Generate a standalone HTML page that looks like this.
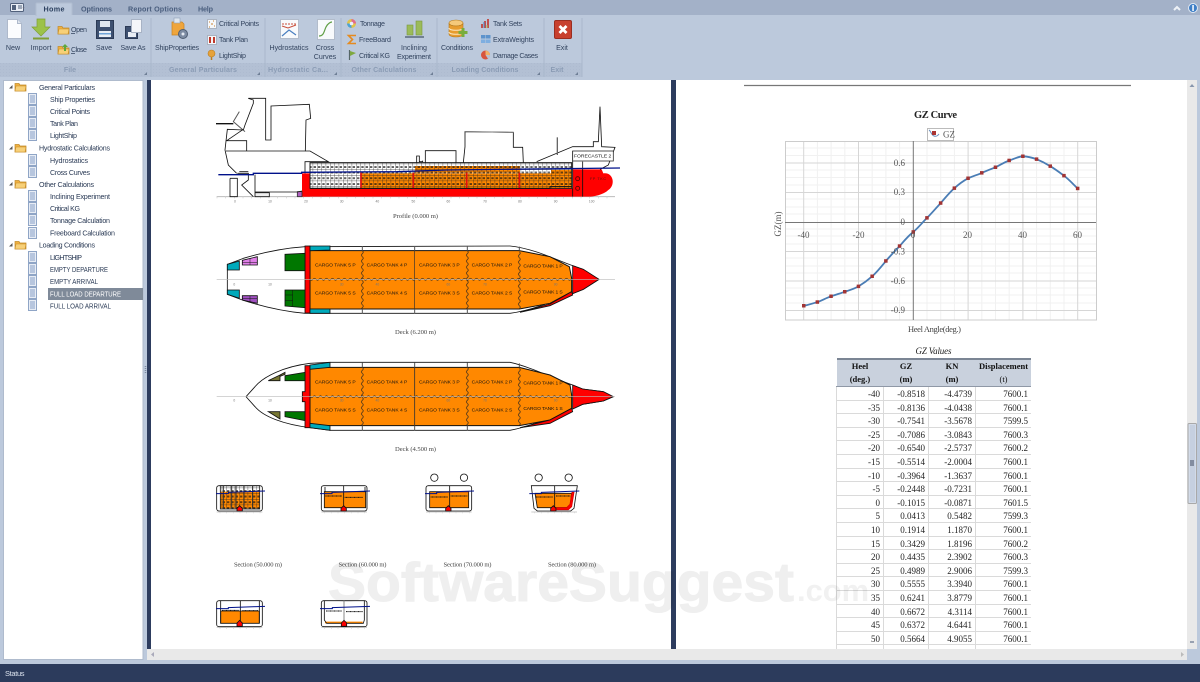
<!DOCTYPE html>
<html lang="en"><head><meta charset="utf-8"><title>GZ Report</title>
<style>
html,body{margin:0;padding:0;width:1200px;height:682px;overflow:hidden;background:#bcc9dc}
svg{position:absolute;left:0;top:0;display:block}
.s{font-family:"Liberation Sans",sans-serif}
.f{font-family:"Liberation Serif",serif}
.rb text{font-family:"Liberation Sans",sans-serif;font-size:7.1px;fill:#33445f}
.m{text-anchor:middle}
.gl text{font-family:"Liberation Sans",sans-serif;font-size:7.1px;font-weight:bold;fill:#8b9cb5;text-anchor:middle}
.tr text{font-family:"Liberation Sans",sans-serif;font-size:7.1px;fill:#2a3a55}
.ct{font-family:"Liberation Sans",sans-serif;font-size:14px;fill:#111}
.lab{font-family:"Liberation Serif",serif;font-size:6.6px;fill:#444;text-anchor:middle}
.ax{font-family:"Liberation Serif",serif;font-size:9px;fill:#555}
.sc text{font-family:"Liberation Sans",sans-serif;font-size:10px;fill:#777;stroke:none;text-anchor:middle}
#tb{position:absolute;left:836px;top:358px;width:195px;height:291px;overflow:hidden;filter:blur(.25px)}
#tb table{border-collapse:collapse;table-layout:fixed;width:195px;font-family:"Liberation Serif",serif;font-size:9px;color:#222}
#tb th{background:#c9d1dd;border-top:2px solid #7b8594;border-bottom:1px solid #8f98a6;height:26px;line-height:13px;font-size:8.5px;font-weight:bold;padding:0;color:#111}
#tb td{height:13.6px;padding:2px 3px 0 0;line-height:10.6px;text-align:right;border:1px solid #dadada;box-sizing:border-box}
</style></head><body>
<svg width="1200" height="682" viewBox="0 0 1200 682" style="filter:blur(.3px)">
<defs>
<pattern id="cells" width="13" height="17" patternUnits="userSpaceOnUse"><path d="M0,0V17M0,0H13" stroke="#222" stroke-width="2" fill="none"/><path d="M3,8h7M3,11h7" stroke="#111" stroke-width="2"/></pattern>
<pattern id="hw" width="18" height="10" patternUnits="userSpaceOnUse"><path d="M0,5C4,9 5,9 9,5C13,1 14,1 18,5" stroke="#222" stroke-width="2" fill="none"/></pattern>
<pattern id="vw" width="10" height="18" patternUnits="userSpaceOnUse"><path d="M5,0C9,4 9,5 5,9C1,13 1,14 5,18" stroke="#222" stroke-width="2" fill="none"/></pattern>
<pattern id="dot" width="3" height="3" patternUnits="userSpaceOnUse"><rect width="1" height="1" fill="#aebbd0"/></pattern>
<g id="doc"><rect x=".5" y=".5" width="8" height="11" fill="#e8edf5" stroke="#8fa5c6"/><path d="M2,3h5M2,5h5M2,7h5M2,9h5" stroke="#86a0c6"/></g>
<g id="fld"><path d="M0,2.5h4l1,1.5h6v6H0z" fill="#f0b040" stroke="#c08a2a" stroke-width=".7"/><path d="M1,5h10l-1,5H0z" fill="#f7d078" stroke="#c98f2a" stroke-width=".6"/></g>
<g id="exp"><path d="M0,3.5L3.5,3.5V0z" fill="#555"/></g>
<g id="ruler"><path d="M0,0H137" stroke="#bbb" stroke-width="2"/><path d="M10,0v4M30,0v4M50,0v4M70,0v4M90,0v4M110,0v4M130,0v4" stroke="#ccc" stroke-width="1.5"/></g>
</defs>

<!-- background chrome -->
<rect width="1200" height="682" fill="#bcc9dc"/>
<rect width="1200" height="15" fill="#a3b1c8"/>
<rect x="36" y="3" width="36" height="13" fill="#bcc9dc"/>
<path d="M36,16V4q0-1 1-1h34q1,0 1,1V15" fill="none" stroke="#b0bdd1"/>

<!-- title row -->
<g>
<rect x="10.500" y="3.500" width="13" height="8" rx="1" fill="#e8edf5" stroke="#51617c"/>
<rect x="12" y="5" width="4" height="5" fill="#51617c"/><path d="M18,6h4M18,8h4" stroke="#51617c"/>
<path d="M22.500,7.500l2,0-1,1.500z" fill="#667"/>
</g>
<g class="s" font-size="7.2" font-weight="bold" fill="#4a5e7e">
<text x="54" y="11.500" text-anchor="middle" fill="#2c405f" textLength="21">Home</text>
<text x="81" y="11.500" textLength="31">Optinons</text>
<text x="128" y="11.500" textLength="54">Report Options</text>
<text x="198" y="11.500" textLength="15">Help</text>
</g>
<path d="M1174,10l3-3 3,3" fill="none" stroke="#eef2f7" stroke-width="2"/>
<circle cx="1193" cy="8" r="4.500" fill="#3f7fc6" stroke="#dfe8f4"/><rect x="1192.300" y="5" width="1.500" height="6" fill="#fff"/>

<!-- ribbon footer -->
<rect x="0" y="63" width="582" height="14" fill="#b3c0d4"/>
<rect x="0" y="63" width="582" height="14" fill="url(#dot)"/>
<path d="M151,18V77M265,18V77M341,18V77M437,18V77M544,18V77M582,18V77" stroke="#aab8cd"/>
<path d="M147,72l-3,3h3zM260,72l-3,3h3zM337,72l-3,3h3zM433,72l-3,3h3zM540,72l-3,3h3zM578,72l-3,3h3z" fill="#6f7f96"/>
<g class="gl">
<text x="70" y="72">File</text>
<text x="203" y="72" textLength="68">General Particulars</text>
<text x="298" y="72" textLength="60">Hydrostatic Ca...</text>
<text x="384" y="72" textLength="65">Other Calculations</text>
<text x="485" y="72" textLength="67">Loading Conditions</text>
<text x="557" y="72">Exit</text>
</g>

<!-- ribbon labels -->
<g class="rb">
<text class="m" x="13" y="50">New</text>
<text class="m" x="41" y="50" textLength="21">Import</text>
<text x="71" y="32" textLength="16">Open</text>
<text x="71" y="52" textLength="16">Close</text>
<text class="m" x="104" y="50">Save</text>
<text class="m" x="133" y="50" textLength="25">Save As</text>
<text class="m" x="177" y="50" textLength="44">ShipProperties</text>
<text x="219" y="26" textLength="40">Critical Points</text>
<text x="219" y="42" textLength="29">Tank Plan</text>
<text x="219" y="58" textLength="27">LightShip</text>
<text class="m" x="289" y="50" textLength="39">Hydrostatics</text>
<text class="m" x="325" y="50">Cross</text>
<text class="m" x="325" y="59">Curves</text>
<text x="360" y="26" textLength="25">Tonnage</text>
<text x="359" y="42" textLength="32">FreeBoard</text>
<text x="359" y="58" textLength="31">Critical KG</text>
<text class="m" x="414" y="50" textLength="26">Inclining</text>
<text class="m" x="414" y="59" textLength="34">Experiment</text>
<text class="m" x="457" y="50" textLength="32">Conditions</text>
<text x="493" y="26" textLength="29">Tank Sets</text>
<text x="493" y="42" textLength="41">ExtraWeights</text>
<text x="493" y="58" textLength="45">Damage Cases</text>
<text class="m" x="562" y="50">Exit</text>
</g>
<path d="M71,33.500h4M71,53.500h4" stroke="#33445f" stroke-width=".7"/>

<!-- ribbon icons -->
<path d="M7.500,19.500h10l4,4v15h-14z" fill="#fbfcfe" stroke="#aeb9cb"/><path d="M17.500,19.500v4h4" fill="#dfe5ee" stroke="#aeb9cb"/>
<path d="M37,19h8v8h5l-9,9-9-9h5z" fill="#9cc24a" stroke="#7f9e35" stroke-width=".7"/><path d="M33,38.500h16" stroke="#7f9e35" stroke-width="2"/>
<use href="#fld" x="58" y="24"/>
<use href="#fld" x="58" y="44"/><path d="M65,44l3,3h-2v4h-2v-4h-2z" fill="#5fa83a"/>
<path d="M96.500,20.500h17v18h-17z" fill="#3d5070" stroke="#2b3a55"/><rect x="100" y="21" width="10" height="6" fill="#dfe6ef"/><rect x="99" y="31" width="12" height="6" fill="#e9eef5"/><rect x="99" y="33" width="12" height="1.500" fill="#6fa4d8"/>
<path d="M125.500,26.500h12v12h-12z" fill="#3d5070" stroke="#2b3a55"/><rect x="128" y="32" width="8" height="5" fill="#e9eef5"/><path d="M131.500,19.500h10v13h-10z" fill="#f4f6fa" stroke="#a8b3c5"/>
<path d="M172,22h10l2,2v11h-12z" fill="#efa53c" stroke="#c98422" stroke-width=".7"/><rect x="174" y="18" width="6" height="5" fill="#dfe6ef" stroke="#8ea0b8" stroke-width=".6"/><circle cx="183" cy="34" r="4.500" fill="#7d8ca3" stroke="#4f5d73"/><circle cx="183" cy="34" r="1.500" fill="#e6ebf3"/>
<rect x="207.500" y="19.500" width="9" height="9" fill="#f5f7fa" stroke="#aab3c1"/><path d="M209,22h1M213,21h1M211,24h2M209,27h1M214,26h1" stroke="#c9802f"/>
<rect x="207.500" y="35.500" width="9" height="9" fill="#f5f7fa" stroke="#aab3c1"/><rect x="209" y="37" width="2" height="6" fill="#c0392b"/><rect x="213" y="37" width="2" height="6" fill="#c0392b"/>
<circle cx="211.500" cy="53.500" r="3.500" fill="#e6a23a" stroke="#b97d20" stroke-width=".6"/><path d="M211.500,57v3" stroke="#b97d20" stroke-width="1.500"/>
<rect x="280.500" y="19.500" width="18" height="19" fill="#f8fafc" stroke="#b2bccb"/><path d="M282,24h15" stroke="#c9503c" stroke-dasharray="2 1"/><path d="M282,26l6,2 8-3" stroke="#c9503c" fill="none"/><path d="M282,36l7-6 7,5" stroke="#4a7fc0" fill="none" stroke-width="1.200"/>
<rect x="317.500" y="19.500" width="17" height="20" fill="#f8fafc" stroke="#b2bccb"/><path d="M319,36c5,0 5-5 7-9s5-5 6-5" stroke="#5f9e45" fill="none" stroke-width="1.200"/>
<circle cx="351.500" cy="23.500" r="4.500" fill="#e0c34a"/><path d="M351.500,23.500V19a4.500,4.500 0 0 1 4.500,4.500z" fill="#e06a8f"/><path d="M351.500,23.500H347a4.500,4.500 0 0 0 4.500,4.500z" fill="#4aa3d8"/><circle cx="351.500" cy="23.500" r="1.800" fill="#eef"/>
<path d="M356,35.500h-7.500l4,4-4,4h7.500" fill="none" stroke="#e58a1f" stroke-width="1.600"/>
<path d="M349.500,50v10" stroke="#566" stroke-width="1.200"/><path d="M350,51l6,2-6,3z" fill="#7ea83f"/>
<rect x="407" y="25" width="6" height="10" fill="#9bbb59" stroke="#7b983f" stroke-width=".6"/><rect x="416" y="21" width="6" height="14" fill="#9bbb59" stroke="#7b983f" stroke-width=".6"/><path d="M405,37h19" stroke="#44546a" stroke-width="1.200"/>
<ellipse cx="456" cy="23" rx="7" ry="3" fill="#f5c97a" stroke="#b47a1e" stroke-width=".6"/><path d="M449,23v11c0,4 14,4 14,0V23c0,4-14,4-14,0z" fill="#e79c2e" stroke="#b47a1e" stroke-width=".6"/><path d="M449,28c0,3 14,3 14,0M449,32c0,3 14,3 14,0" stroke="#fbe6bd" fill="none"/><path d="M463,28v9M458.500,32.500h9" stroke="#79ad3c" stroke-width="3"/>
<path d="M482,24v4M485,21v7M488,19v9" stroke-width="2" stroke="#c0504d"/><path d="M484,22v6" stroke="#4f81bd" stroke-width="1"/><path d="M487,25v3" stroke="#9bbb59" stroke-width="1"/>
<rect x="481" y="35" width="4.500" height="3.500" fill="#5d93cc"/><rect x="486" y="35" width="4.500" height="3.500" fill="#5d93cc"/><rect x="481" y="39.500" width="4.500" height="3.500" fill="#7eaee0"/><rect x="486" y="39.500" width="4.500" height="3.500" fill="#7eaee0"/>
<circle cx="485.500" cy="55" r="4.500" fill="#d6553f"/><path d="M485.500,55V50.500a4.500,4.500 0 0 1 4.500,4.500z" fill="#f0b16a"/><path d="M485.500,55h4.500a4.500,4.500 0 0 1-2,3.700z" fill="#b8c4d4"/>
<rect x="554.500" y="20.500" width="17" height="18" rx="1.500" fill="#c8402e" stroke="#9a2d20"/><path d="M559.500,26l7,7M566.500,26l-7,7" stroke="#fff" stroke-width="2.800"/>

<!-- tree -->
<rect x="3.500" y="80.500" width="139.500" height="579" fill="#fff" stroke="#afbbcd"/>
<rect x="48" y="288" width="95" height="12" fill="#7f8a99"/>
<use href="#exp" x="9" y="85"/><use href="#exp" x="9" y="146"/><use href="#exp" x="9" y="182"/><use href="#exp" x="9" y="243"/>
<use href="#fld" x="15" y="81"/><use href="#fld" x="15" y="142"/><use href="#fld" x="15" y="178"/><use href="#fld" x="15" y="239"/>
<use href="#doc" x="28" y="93"/><use href="#doc" x="28" y="105"/><use href="#doc" x="28" y="117"/><use href="#doc" x="28" y="129"/>
<use href="#doc" x="28" y="154"/><use href="#doc" x="28" y="166"/>
<use href="#doc" x="28" y="190"/><use href="#doc" x="28" y="202"/><use href="#doc" x="28" y="214"/><use href="#doc" x="28" y="227"/>
<use href="#doc" x="28" y="251"/><use href="#doc" x="28" y="263"/><use href="#doc" x="28" y="275"/><use href="#doc" x="28" y="287"/><use href="#doc" x="28" y="299"/>
<g class="tr">
<text x="39" y="90" textLength="56">General Particulars</text>
<text x="50" y="102" textLength="45">Ship Properties</text>
<text x="50" y="114" textLength="40">Critical Points</text>
<text x="50" y="126" textLength="28">Tank Plan</text>
<text x="50" y="138" textLength="27">LightShip</text>
<text x="39" y="150.500" textLength="71">Hydrostatic Calculations</text>
<text x="50" y="163" textLength="38">Hydrostatics</text>
<text x="50" y="175" textLength="40">Cross Curves</text>
<text x="39" y="187" textLength="55">Other Calculations</text>
<text x="50" y="199" textLength="60">Inclining Experiment</text>
<text x="50" y="211" textLength="30">Critical KG</text>
<text x="50" y="223" textLength="60">Tonnage Calculation</text>
<text x="50" y="235.500" textLength="65">Freeboard Calculation</text>
<text x="39" y="247.500" textLength="56">Loading Conditions</text>
<text x="50" y="260" textLength="32">LIGHTSHIP</text>
<text x="50" y="272" textLength="58" lengthAdjust="spacingAndGlyphs">EMPTY DEPARTURE</text>
<text x="50" y="284" textLength="48" lengthAdjust="spacingAndGlyphs">EMPTY ARRIVAL</text>
<text x="50" y="296.500" textLength="71" lengthAdjust="spacingAndGlyphs" style="fill:#fff">FULL LOAD DEPARTURE</text>
<text x="50" y="308.500" textLength="61" lengthAdjust="spacingAndGlyphs">FULL LOAD ARRIVAL</text>
</g>
<path d="M145.500,366v8" stroke="#7c8aa0" stroke-dasharray="1 1" stroke-width="1.500"/>

<!-- document area -->
<rect x="147" y="80" width="1040" height="570" fill="#fff"/>
<rect x="147" y="80" width="4" height="570" fill="#2d3c5e"/>
<rect x="671" y="80" width="5" height="570" fill="#2d3c5e"/>
<path d="M744,85.500H1131" stroke="#777" stroke-width="1.300"/>

<!-- scrollbars -->
<rect x="147" y="649" width="1040" height="11" fill="#e9e9e9"/>
<path d="M154,652v5l-3-2.500z" fill="#aab"/><path d="M1181,652v5l3-2.500z" fill="#bbb"/>
<rect x="1187" y="80" width="10" height="569" fill="#e9e9e9"/>
<rect x="1188" y="423.500" width="8.500" height="80" rx="1" fill="#d3dbe8" stroke="#a9a9a9"/>
<rect x="1190" y="425" width="5" height="77" fill="#c6d0e0"/>
<rect x="1190" y="460" width="4" height="6" fill="#838da0"/>
<path d="M1192,84l-2.500,3h5z" fill="#8896ad"/><path d="M1190,642h4" stroke="#7c899e" stroke-width="1.500"/>

<!-- status -->
<rect x="0" y="664" width="1200" height="18" fill="#2c3b5c"/>
<text class="s" x="5" y="676" font-size="7.500" fill="#d9e0ec" textLength="19.500">Status</text>

<!-- profile -->
<g transform="translate(200,90) scale(.33333)" fill="none" stroke="#111" stroke-width="2.500">
<path d="M50,320H1245" stroke="#bbb" stroke-width="3"/>
<path d="M50,322H1245" stroke="#ccc" stroke-width="6" stroke-dasharray="2 24"/>
<path d="M306,295H1118V320H306z" fill="#f00" stroke="none"/>
<path d="M306,250H330V320H306z" fill="#f00" stroke="none"/>
<path d="M1118,238H1205L1210,250C1240,245 1248,285 1225,300C1210,315 1180,320 1165,320H1118z" fill="#f00" stroke="none"/>
<rect x="330" y="218" width="785" height="77" fill="#fff" stroke="#222"/>
<rect x="483" y="250" width="570" height="45" fill="#f80" stroke="none"/>
<rect x="1053" y="240" width="62" height="55" fill="#f80" stroke="none"/>
<rect x="645" y="228" width="315" height="20" fill="#f80" stroke="none"/>
<rect x="330" y="218" width="785" height="77" fill="url(#cells)" stroke="#222"/>
<path d="M483,248V297M640,248V297M800,248V297M958,248V297" stroke="#e01010" stroke-width="5"/>
<path d="M330,295H1050V290H1115" stroke="#111" stroke-width="3"/>
<path d="M1118,183V320M1148,215V320" stroke="#111"/>
<circle cx="1133" cy="266" r="6" stroke="#500"/><circle cx="1133" cy="295" r="6" stroke="#500"/>
<path d="M145,25H197V150H213V48L328,43 332,85 318,90 316,183H78" />
<path d="M145,25L160,30 160,40 135,105 130,120 82,118 75,180 85,225 110,250"/>
<path d="M48,101H100" stroke-width="4"/><path d="M118,65L100,95 135,125" stroke="#555" stroke-width="3"/>
<path d="M78,152H140V183M80,152L130,118"/>
<path d="M316,183H330L385,215H315V250"/>
<path d="M90,265V320H112V265H90M112,250H145V270L125,285 160,320M118,245H145"/>
<path d="M165,308H208V320H165z" fill="#eee"/><rect x="292" y="305" width="14" height="15" fill="#b060c0" stroke="#333"/>
<path d="M165,254V306H292L306,303"/>
<path d="M676,218V182H768V218M790,218L795,170 795,125 940,127 940,172H968L970,218M650,218V198H658V215H668V212"/>
<path d="M795,125L940,127" stroke="#777" stroke-width="3"/>
<path d="M1010,215L1118,170H1180V155H1195L1200,50 1205,170 1245,172 1225,225 1200,238"/>
<path d="M1072,195V142" stroke-width="4" stroke="#666"/>
<rect x="1118" y="183" width="122" height="30" fill="#fff" stroke="#333"/>
<path d="M55,254H160V250H305V247L590,245 740,240 1260,234" stroke="#00118a" stroke-width="4"/>
<text x="1122" y="203" stroke="none" fill="#111" class="s" font-size="15" textLength="112">FORECASTLE 2</text>
<text x="1170" y="270" stroke="none" fill="#511" class="s" font-size="11" textLength="48">FP TKC</text>
<g class="sc"><text x="105" y="337">0</text><text x="210" y="337">10</text><text x="318" y="337">20</text><text x="425" y="337">30</text><text x="532" y="337">40</text><text x="640" y="337">50</text><text x="745" y="337">60</text><text x="855" y="337">70</text><text x="960" y="337">80</text><text x="1067" y="337">90</text><text x="1175" y="337">100</text></g>
</g>
<text class="lab" x="415.500" y="218" textLength="45">Profile (0.000 m)</text>

<!-- deck 6.2 -->
<g transform="translate(200,235) scale(.33333)" fill="none" stroke="#111" stroke-width="2.500">
<path d="M82,88L130,70C180,55 240,40 315,35L930,33C1000,40 1070,75 1118,92L1150,103 1197,133 1150,163 1118,176C1070,195 1000,225 930,235L315,235C240,228 180,212 130,196L82,178z" fill="#fff"/>
<path d="M330,47H958L1050,65 1108,95 1115,130V170L1050,205 958,222H330z" fill="#f80" stroke="#111" stroke-width="3"/>
<path d="M960,232L1050,207 1115,170 1118,180 1050,212z" fill="#f00" stroke="#111"/>
<path d="M1118,92L1150,103 1197,133 1150,163 1118,176z" fill="#f00" stroke="#111"/>
<rect x="315" y="33" width="15" height="201" fill="#f00" stroke="#111"/>
<path d="M82,88L118,78V105H82z" fill="#0ab" /><path d="M82,165H118V190L82,178z" fill="#0ab"/>
<path d="M127,76L172,65V90H127z" fill="#e080e8"/><path d="M127,182H172V205L127,195z" fill="#a050c0"/>
<path d="M150,70V90M127,82H172M150,182V200M127,190H172" stroke-width="1.500"/>
<path d="M255,58L315,55V107H255z" fill="#070"/><path d="M255,165H315V218L255,213z" fill="#070"/><path d="M278,165V213M255,180H278M255,197H278" stroke-width="1.500"/>
<path d="M330,33H390V45L330,47z" fill="#0ab"/><path d="M330,222H390V235H330z" fill="#0ab"/>
<path d="M487,33V47M487,222V235M644,33V47M644,222V235M802,33V47M802,222V235M958,35V47" stroke="#555" stroke-width="3"/>
<path d="M644,47V222" stroke="#333" stroke-width="2"/>
<g transform="translate(482,47)"><rect width="10" height="175" fill="url(#vw)" stroke="none"/></g>
<g transform="translate(797,47)"><rect width="10" height="175" fill="url(#vw)" stroke="none"/></g>
<g transform="translate(953,50)"><rect width="10" height="170" fill="url(#vw)" stroke="none"/></g>
<g transform="translate(330,128)"><rect width="785" height="10" fill="url(#hw)" stroke="none"/></g>
<path d="M50,133H1245" stroke="#bbb" stroke-width="2"/>
<g stroke="none" fill="#111" class="s" font-size="14.800">
<text x="345" y="94" textLength="122">CARGO TANK 5 P</text><text x="500" y="94" textLength="122">CARGO TANK 4 P</text><text x="657" y="94" textLength="122">CARGO TANK 3 P</text><text x="815" y="94" textLength="122">CARGO TANK 2 P</text><text x="970" y="97" textLength="118">CARGO TANK 1 P</text>
<text x="345" y="178" textLength="122">CARGO TANK 5 S</text><text x="500" y="178" textLength="122">CARGO TANK 4 S</text><text x="657" y="178" textLength="122">CARGO TANK 3 S</text><text x="815" y="178" textLength="122">CARGO TANK 2 S</text><text x="970" y="176" textLength="118">CARGO TANK 1 S</text>
</g>
<g class="sc"><text x="103" y="152">0</text><text x="210" y="152">10</text><text x="425" y="152">30</text><text x="532" y="152">40</text><text x="745" y="152">60</text><text x="855" y="152">70</text><text x="1067" y="152">90</text></g>
</g>
<text class="lab" x="415.500" y="334" textLength="41">Deck (6.200 m)</text>

<!-- deck 4.5 -->
<g transform="translate(200,235) scale(.33333)" fill="none" stroke="#111" stroke-width="2.500">
<path d="M138,485L165,455C190,425 250,395 330,385L390,382H930C990,395 1060,430 1118,450L1148,462 1210,470 1240,485 1210,498 1148,508 1118,522C1060,545 990,575 930,586H390L330,578C250,568 190,545 165,515z" fill="#fff"/>
<path d="M330,397H958L1050,420 1110,450 1115,480V520L1050,555 958,572H330z" fill="#f80" stroke="#111" stroke-width="3"/>
<path d="M960,578L1050,555 1115,520 1118,530 1050,565z" fill="#f00" stroke="#111"/>
<path d="M1118,450L1148,462 1210,470 1240,485 1210,498 1148,508 1118,522z" fill="#f00" stroke="#111"/>
<path d="M315,392H330V578H315V500H307V470H315z" fill="#f00" stroke="#111"/>
<path d="M255,422L315,412V437H255z" fill="#070"/><path d="M255,530H315V557L255,545z" fill="#070"/>
<path d="M205,437L240,420V437zM240,420L255,412V418L240,424z" fill="#773"/><path d="M205,530H240V552z" fill="#773"/>
<path d="M330,390L390,382V397L330,403z" fill="#0ab"/><path d="M330,565L390,572V586L330,578z" fill="#0ab"/>
<path d="M487,382V397M487,572V586M644,382V397M644,572V586M802,382V397M802,572V586M958,385V397" stroke="#555" stroke-width="3"/>
<path d="M644,397V572" stroke="#333"/>
<g transform="translate(482,397)"><rect width="10" height="175" fill="url(#vw)" stroke="none"/></g>
<g transform="translate(797,397)"><rect width="10" height="175" fill="url(#vw)" stroke="none"/></g>
<g transform="translate(953,400)"><rect width="10" height="170" fill="url(#vw)" stroke="none"/></g>
<g transform="translate(330,480)"><rect width="785" height="10" fill="url(#hw)" stroke="none"/></g>
<path d="M50,485H1245" stroke="#bbb" stroke-width="2"/>
<g stroke="none" fill="#111" class="s" font-size="14.800">
<text x="345" y="445" textLength="122">CARGO TANK 5 P</text><text x="500" y="445" textLength="122">CARGO TANK 4 P</text><text x="657" y="445" textLength="122">CARGO TANK 3 P</text><text x="815" y="445" textLength="122">CARGO TANK 2 P</text><text x="970" y="448" textLength="118">CARGO TANK 1 P</text>
<text x="345" y="530" textLength="122">CARGO TANK 5 S</text><text x="500" y="530" textLength="122">CARGO TANK 4 S</text><text x="657" y="530" textLength="122">CARGO TANK 3 S</text><text x="815" y="530" textLength="122">CARGO TANK 2 S</text><text x="970" y="525" textLength="118">CARGO TANK 1 S</text>
</g>
<g class="sc"><text x="103" y="500">0</text><text x="210" y="500">10</text><text x="425" y="500">30</text><text x="532" y="500">40</text><text x="745" y="500">60</text><text x="855" y="500">70</text><text x="1067" y="500">90</text></g>
</g>
<text class="lab" x="415.500" y="451" textLength="41">Deck (4.500 m)</text>

<!-- sections -->
<g transform="translate(200,465) scale(.33333)" fill="none" stroke="#111" stroke-width="2.500">
<!-- s1 -->
<rect x="50" y="62" width="137" height="76" rx="7" fill="#fff"/>
<rect x="61" y="80" width="118" height="50" fill="#f80" stroke="none"/>
<rect x="61" y="62" width="118" height="70" fill="url(#cells)" stroke="#222"/>
<path d="M70,62V130M95,62V130M108,62V130M132,62V130M158,62V130" stroke="#333" stroke-width="3"/>
<path d="M119,122L127,130V138H111V130z" fill="#f00"/>
<path d="M48,86H85V82L195,78" stroke="#00118a" stroke-width="3"/>
<use href="#ruler" x="50" y="141"/>
<!-- s2 -->
<rect x="364" y="62" width="137" height="76" rx="7" fill="#fff"/>
<path d="M373,80H497V128H373z" fill="#f80" stroke="#111"/><path d="M375,66V80M495,66V80M431,62V128"/>
<path d="M376,93H426M434,97H488" stroke-width="3" stroke-dasharray="3 1"/>
<path d="M431,122L439,130V138H423V130z" fill="#f00"/>
<path d="M360,86H396V82L510,78" stroke="#00118a" stroke-width="3"/>
<use href="#ruler" x="364" y="141"/>
<!-- s3 -->
<circle cx="703" cy="38" r="11"/><circle cx="792" cy="38" r="11"/>
<rect x="678" y="62" width="137" height="76" rx="7" fill="#fff"/>
<path d="M689,80H806V128H689z" fill="#f80" stroke="#111"/>
<path d="M750,78H806V82H750z" fill="#943" stroke="none"/>
<path d="M749,62V128"/><path d="M692,96H743M752,93H802" stroke-width="3" stroke-dasharray="3 1"/>
<path d="M745,122L753,130V138H737V130z" fill="#f00"/>
<path d="M675,86H710V82L822,78" stroke="#00118a" stroke-width="3"/>
<use href="#ruler" x="678" y="141"/>
<!-- s4 -->
<circle cx="1016" cy="38" r="11"/><circle cx="1106" cy="38" r="11"/>
<path d="M994,62H1132L1122,130 1112,138H1012L1002,130z" fill="#fff"/>
<path d="M1005,85H1115L1110,128H1012z" fill="#f80" stroke="#111"/>
<path d="M1064,62V128"/><path d="M1008,96H1058M1068,93H1112" stroke-width="3" stroke-dasharray="3 1"/>
<path d="M1122,82L1115,125 1105,134H1070V128H1100L1110,118 1116,82z" fill="#f00" stroke="#d00"/>
<path d="M1060,122L1068,130V138H1052V130z" fill="#f00"/>
<path d="M988,86H1024V82L1138,78" stroke="#00118a" stroke-width="3"/>
<use href="#ruler" x="994" y="141"/>
<!-- s5 -->
<rect x="50" y="407" width="137" height="78" rx="7" fill="#fff"/>
<path d="M62,438H178V475H62z" fill="#f80" stroke="#111"/><path d="M121,407V475M62,407V475M178,407V475"/>
<path d="M66,436H116M127,437H174" stroke-width="3" stroke-dasharray="3 1"/>
<path d="M119,466L127,474V484H111V474z" fill="#f00"/>
<path d="M48,431H85V428L195,424" stroke="#00118a" stroke-width="3"/>
<use href="#ruler" x="50" y="488"/>
<!-- s6 -->
<rect x="364" y="407" width="137" height="78" rx="7" fill="#fff"/>
<path d="M375,470H488V475H375z" fill="#f80" stroke="none"/>
<path d="M373,440V465L380,475H490L493,465V440M373,407V440M493,407V440"/><path d="M432,407V475" stroke="#888" stroke-width="3"/>
<path d="M378,438H426M438,440H488" stroke-width="3" stroke-dasharray="3 1"/>
<path d="M432,466L440,474V484H424V474z" fill="#f00"/>
<path d="M360,431H397V428L510,424" stroke="#00118a" stroke-width="3"/>
<use href="#ruler" x="364" y="488"/>
</g>
<g class="lab"><text x="258" y="566.500" textLength="48">Section (50.000 m)</text><text x="362.500" y="566.500" textLength="48">Section (60.000 m)</text><text x="467.500" y="566.500" textLength="48">Section (70.000 m)</text><text x="572" y="566.500" textLength="48">Section (80.000 m)</text></g>

<!-- chart -->
<text class="f" x="935.500" y="118" font-size="10.500" font-weight="bold" fill="#222" text-anchor="middle" textLength="43">GZ Curve</text>
<rect x="927.500" y="128.500" width="26" height="12" fill="#fff" stroke="#bbb"/>
<path d="M929,130c2,1 2,5 5,6 3,1 4-1 5-2" fill="none" stroke="#6a8fc0"/><rect x="932" y="131" width="4" height="4" fill="#a33"/>
<text class="ax" x="943" y="137.500" font-size="8">GZ</text>
<g stroke="#f1f1f1" fill="none"><path d="M817.400,141V320M831.100,141V320M844.800,141V320M872.200,141V320M885.900,141V320M899.600,141V320M927,141V320M940.700,141V320M954.400,141V320M981.800,141V320M995.500,141V320M1009.200,141V320M1036.600,141V320M1050.300,141V320M1064,141V320"/><path d="M785,148H1096M785,155.500H1096M785,170H1096M785,177.500H1096M785,185H1096M785,199H1096M785,207H1096M785,214H1096M785,229H1096M785,236H1096M785,244H1096M785,258H1096M785,266H1096M785,273H1096M785,288H1096M785,295H1096M785,303H1096"/></g>
<g stroke="#d6d6d6" fill="none"><path d="M803.700,141V320M858.500,141V320M968.100,141V320M1022.900,141V320M1077.700,141V320M785,163H1096M785,192.500H1096M785,251.500H1096M785,281H1096M785,310.500H1096"/><rect x="785.500" y="141.500" width="311" height="178.500" stroke="#ccc"/></g>
<path d="M913.300,141V320M785,222.500H1096" stroke="#777" fill="none"/>
<path d="M803.700,305.900C810,304.500 812,303.500 817.400,302.100C822,300.500 826,298 831.100,296.300C836,294.500 840,293.500 844.800,291.800C850,290 854,289 858.500,286.400C864,283 868,280 872.200,276.300C877,272 881,267 885.900,261C891,255 895,251 899.600,246.100C904,241 908,236 913.300,232C918,228 922,223 927,217.900C932,213 936,208 940.700,203.100C945,198 950,192 954.400,188.200C959,184 963,181 968.100,178.300C973,176 977,175 981.800,172.900C986,171 991,169 995.500,167.300C1000,165 1005,162 1009.200,160.500C1014,159 1018,156.500 1022.900,156.300C1028,156.500 1032,157.500 1036.600,159.200C1041,161 1046,163.500 1050.300,166.200C1055,169 1059,172 1064,175.700C1069,179.500 1073,184 1077.700,188.500" fill="none" stroke="#4a7db5" stroke-width="1.800"/>
<g fill="#a23434"><rect x="802" y="304" width="3.500" height="3.500"/><rect x="815.600" y="300.300" width="3.500" height="3.500"/><rect x="829.300" y="294.500" width="3.500" height="3.500"/><rect x="843" y="290" width="3.500" height="3.500"/><rect x="856.700" y="284.600" width="3.500" height="3.500"/><rect x="870.400" y="274.500" width="3.500" height="3.500"/><rect x="884.100" y="259.200" width="3.500" height="3.500"/><rect x="897.800" y="244.300" width="3.500" height="3.500"/><rect x="911.500" y="230.200" width="3.500" height="3.500"/><rect x="925.200" y="216.100" width="3.500" height="3.500"/><rect x="938.900" y="201.300" width="3.500" height="3.500"/><rect x="952.600" y="186.400" width="3.500" height="3.500"/><rect x="966.300" y="176.500" width="3.500" height="3.500"/><rect x="980" y="171.100" width="3.500" height="3.500"/><rect x="993.700" y="165.500" width="3.500" height="3.500"/><rect x="1007.400" y="158.700" width="3.500" height="3.500"/><rect x="1021.100" y="154.500" width="3.500" height="3.500"/><rect x="1034.800" y="157.400" width="3.500" height="3.500"/><rect x="1048.500" y="164.400" width="3.500" height="3.500"/><rect x="1062.200" y="173.900" width="3.500" height="3.500"/><rect x="1075.900" y="186.700" width="3.500" height="3.500"/></g>
<g class="ax" text-anchor="middle"><text x="803.500" y="238">-40</text><text x="858.500" y="238">-20</text><text x="913" y="238">0</text><text x="967.500" y="238">20</text><text x="1022.500" y="238">40</text><text x="1077.500" y="238">60</text></g>
<g class="ax" text-anchor="end"><text x="905" y="166">0.6</text><text x="905" y="195">0.3</text><text x="905" y="225">0</text><text x="905" y="254.500">-0.3</text><text x="905" y="284">-0.6</text><text x="905" y="313">-0.9</text></g>
<text class="ax" transform="translate(781,224) rotate(-90)" text-anchor="middle" font-size="8.500">GZ(m)</text>
<text class="f" x="934.500" y="332" font-size="8.500" fill="#444" text-anchor="middle" textLength="53">Heel Angle(deg.)</text>
<text class="f" x="933.500" y="354" font-size="9" font-style="italic" fill="#222" text-anchor="middle" textLength="36">GZ Values</text>
</svg>

<div id="tb"><table>
<colgroup><col style="width:47px"><col style="width:45px"><col style="width:47px"><col style="width:56px"></colgroup>
<thead><tr><th>Heel<br>(deg.)</th><th>GZ<br>(m)</th><th>KN<br>(m)</th><th>Displacement<br><span style="font-weight:normal">(t)</span></th></tr></thead>
<tbody>
<tr><td>-40</td><td>-0.8518</td><td>-4.4739</td><td>7600.1</td></tr>
<tr><td>-35</td><td>-0.8136</td><td>-4.0438</td><td>7600.1</td></tr>
<tr><td>-30</td><td>-0.7541</td><td>-3.5678</td><td>7599.5</td></tr>
<tr><td>-25</td><td>-0.7086</td><td>-3.0843</td><td>7600.3</td></tr>
<tr><td>-20</td><td>-0.6540</td><td>-2.5737</td><td>7600.2</td></tr>
<tr><td>-15</td><td>-0.5514</td><td>-2.0004</td><td>7600.1</td></tr>
<tr><td>-10</td><td>-0.3964</td><td>-1.3637</td><td>7600.1</td></tr>
<tr><td>-5</td><td>-0.2448</td><td>-0.7231</td><td>7600.1</td></tr>
<tr><td>0</td><td>-0.1015</td><td>-0.0871</td><td>7601.5</td></tr>
<tr><td>5</td><td>0.0413</td><td>0.5482</td><td>7599.3</td></tr>
<tr><td>10</td><td>0.1914</td><td>1.1870</td><td>7600.1</td></tr>
<tr><td>15</td><td>0.3429</td><td>1.8196</td><td>7600.2</td></tr>
<tr><td>20</td><td>0.4435</td><td>2.3902</td><td>7600.3</td></tr>
<tr><td>25</td><td>0.4989</td><td>2.9006</td><td>7599.3</td></tr>
<tr><td>30</td><td>0.5555</td><td>3.3940</td><td>7600.1</td></tr>
<tr><td>35</td><td>0.6241</td><td>3.8779</td><td>7600.1</td></tr>
<tr><td>40</td><td>0.6672</td><td>4.3114</td><td>7600.1</td></tr>
<tr><td>45</td><td>0.6372</td><td>4.6441</td><td>7600.1</td></tr>
<tr><td>50</td><td>0.5664</td><td>4.9055</td><td>7600.1</td></tr>
<tr><td>&nbsp;</td><td>&nbsp;</td><td>&nbsp;</td><td>&nbsp;</td></tr>
</tbody></table></div>

<svg width="1200" height="682" viewBox="0 0 1200 682" style="pointer-events:none;mix-blend-mode:multiply">
<text x="328" y="601" font-family="Liberation Sans, sans-serif" font-weight="bold" font-size="55" fill="#efefef" stroke="#efefef" stroke-width="1" textLength="466" lengthAdjust="spacingAndGlyphs">SoftwareSuggest</text>
<text x="797" y="601" font-family="Liberation Sans, sans-serif" font-weight="bold" font-size="31" fill="#f1f1f1" textLength="72" lengthAdjust="spacingAndGlyphs">.com</text>
</svg>
</body></html>
